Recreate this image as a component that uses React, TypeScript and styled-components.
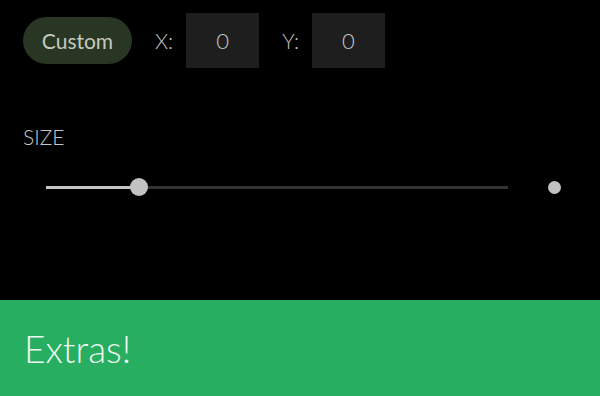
import styled, { createGlobalStyle } from 'styled-components';

const GlobalStyle = createGlobalStyle`
    html, body {
        margin: 0;
        padding: 0;
        background: #000;
    }
    body {
        font-family: Lato, 'Open Sans', sans-serif;
        font-weight: 300;
        color: #c8c8c8;
    }
`;

const App = () => {
    const value = 20.2;

    return (
        <Page>
            <GlobalStyle />
            <Content>
                <Toolbar>
                    <Pill>Custom</Pill>
                    <Coord>
                        <CoordLabel>X:</CoordLabel>
                        <CoordBox>0</CoordBox>
                    </Coord>
                    <Coord>
                        <CoordLabel>Y:</CoordLabel>
                        <CoordBox>0</CoordBox>
                    </Coord>
                </Toolbar>
                <SectionTitle>SIZE</SectionTitle>
                <SliderRow>
                    <Track>
                        <Fill style={{ width: `${value}%` }} />
                        <Thumb style={{ left: `${value}%` }} />
                    </Track>
                    <Dot />
                </SliderRow>
            </Content>
            <Footer>Extras!</Footer>
        </Page>
    );
};

export default App;

const Page = styled.div`
    width: 600px;
    height: 396px;
    display: flex;
    flex-direction: column;
    background: #000;
`;

const Content = styled.div`
    flex: 1;
    padding: 13px 0 0 23px;
    display: flex;
    flex-direction: column;
`;

const Toolbar = styled.div`
    display: flex;
    align-items: center;
    gap: 23px;
`;

const Pill = styled.div`
    width: 109px;
    height: 47px;
    border-radius: 24px;
    background: #283623;
    color: #c4c9bf;
    font-size: 21px;
    font-weight: 400;
    display: flex;
    align-items: center;
    justify-content: center;
`;

const Coord = styled.div`
    display: flex;
    align-items: center;
    gap: 13px;
`;

const CoordLabel = styled.span`
    font-size: 21px;
    color: #c0c0c0;
`;

const CoordBox = styled.div`
    width: 73px;
    height: 55px;
    background: #1e1e1e;
    color: #c8c8c8;
    font-size: 22px;
    display: flex;
    align-items: center;
    justify-content: center;
`;

const SectionTitle = styled.div`
    margin-top: 56px;
    font-size: 21px;
    color: #c8c8c8;
`;

const SliderRow = styled.div`
    margin-top: 28px;
    padding-left: 23px;
    display: flex;
    align-items: center;
    height: 20px;
`;

const Track = styled.div`
    position: relative;
    width: 462px;
    height: 3px;
    background: #333;
`;

const Fill = styled.div`
    height: 100%;
    background: #c6c6c6;
`;

const Thumb = styled.div`
    position: absolute;
    top: 50%;
    width: 18px;
    height: 18px;
    border-radius: 50%;
    background: #c2c2c2;
    transform: translate(-50%, -50%);
`;

const Dot = styled.div`
    width: 13px;
    height: 13px;
    border-radius: 50%;
    background: #c2c2c2;
    margin-left: 40px;
`;

const Footer = styled.div`
    height: 96px;
    background: #27ae60;
    color: #eef7f0;
    font-size: 37px;
    font-weight: 300;
    padding-left: 24px;
    display: flex;
    align-items: center;
`;
